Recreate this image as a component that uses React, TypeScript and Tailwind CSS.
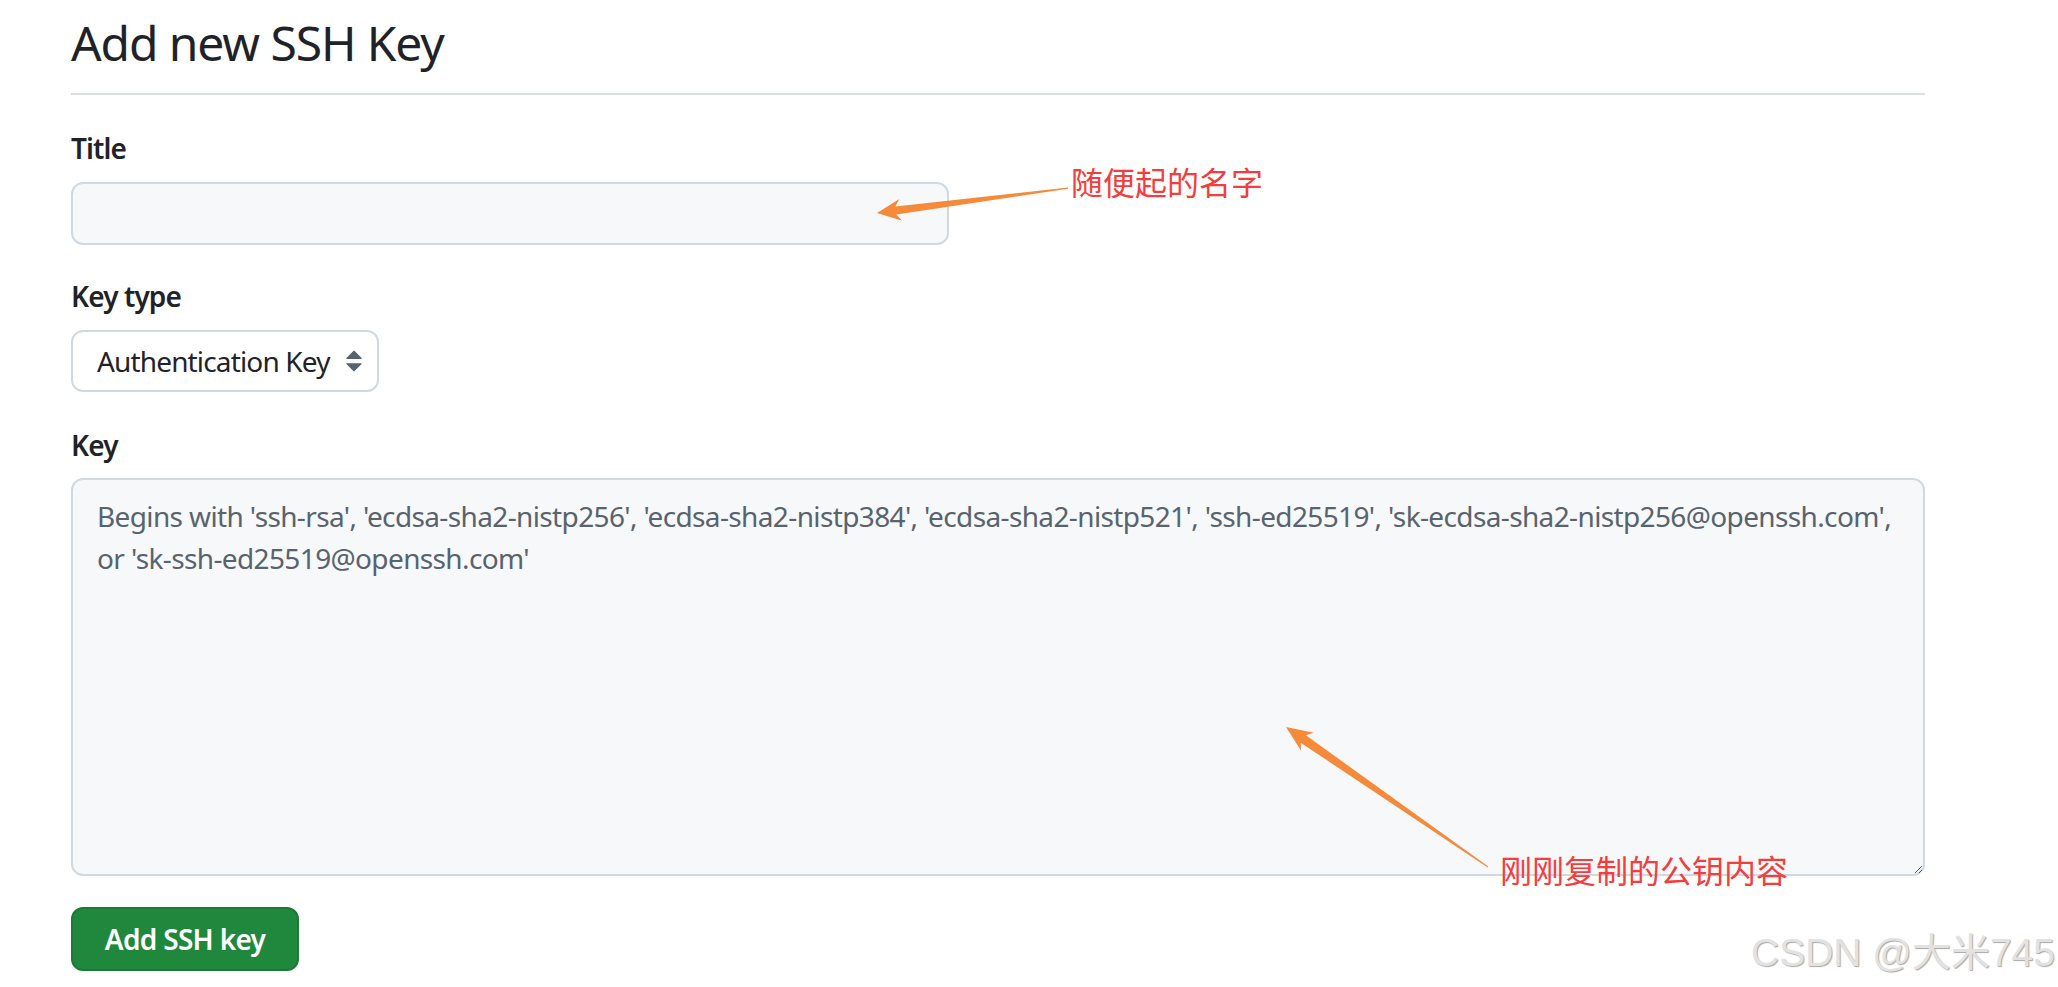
import React from "react";

function SelectArrows() {
  return (
    <svg width="34" height="34" viewBox="0 0 16 16" fill="#59636e" aria-hidden="true">
      <path d="M4.427 9.427l3.396 3.396a.25.25 0 00.354 0l3.396-3.396A.25.25 0 0011.396 9H4.604a.25.25 0 00-.177.427zM4.427 6.573l3.396-3.396a.25.25 0 01.354 0l3.396 3.396A.25.25 0 0111.396 7H4.604a.25.25 0 01-.177-.427z" />
    </svg>
  );
}

export default function App() {
  const placeholder =
    "Begins with 'ssh-rsa', 'ecdsa-sha2-nistp256', 'ecdsa-sha2-nistp384', 'ecdsa-sha2-nistp521', 'ssh-ed25519', 'sk-ecdsa-sha2-nistp256@openssh.com',\nor 'sk-ssh-ed25519@openssh.com'";
  return (
    <div className="relative w-full h-[987px] overflow-hidden bg-white text-[#1f2328] font-['Noto_Sans',sans-serif]">
      <div className="flex flex-col pl-[71px] pt-[11px] w-[1925px]">
        <h1 className="h-[64px] text-[48px] leading-[64px] font-normal tracking-[-1.1px] whitespace-nowrap">
          Add new SSH Key
        </h1>
        <div className="mt-[18px] h-[2px] w-[1854px] bg-[#d8dee4]" />

        <label className="mt-[33px] h-[40px] text-[28px] leading-[40px] font-semibold tracking-[-0.9px]">
          Title
        </label>
        <input
          type="text"
          className="mt-[14px] h-[63px] w-[878px] rounded-[12px] border-2 border-[#d1d9e0] bg-[#f6f8fa] px-[24px] text-[28px] outline-none"
        />

        <label className="mt-[31px] h-[40px] text-[28px] leading-[40px] font-semibold tracking-[-0.9px]">
          Key type
        </label>
        <button
          type="button"
          className="mt-[14px] flex h-[62px] w-[308px] items-center rounded-[12px] border-2 border-[#d1d9e0] bg-white pl-[24px] text-left"
        >
          <span className="w-[240px] text-[28px] leading-[42px] tracking-[-0.85px] whitespace-nowrap text-[#1f2328]">
            Authentication Key
          </span>
          <SelectArrows />
        </button>

        <label className="mt-[33px] h-[40px] text-[28px] leading-[40px] font-semibold tracking-[-0.9px]">
          Key
        </label>
        <textarea
          placeholder={placeholder}
          className="mt-[13px] h-[398px] w-[1854px] rounded-[12px] border-2 border-[#d1d9e0] bg-[#f6f8fa] px-[24px] pt-[15px] text-[28px] leading-[42px] tracking-[-0.63px] text-[#1f2328] outline-none placeholder:text-[#59636e]"
        />

        <button
          type="button"
          className="mt-[31px] flex h-[64px] w-[228px] items-center justify-center rounded-[12px] border-2 border-[#1c7a37] bg-[#1f883d] text-[28px] leading-[40px] font-semibold tracking-[-0.7px] text-white"
        >
          Add SSH key
        </button>
      </div>

      {/* annotations */}
      <svg
        className="pointer-events-none absolute left-0 top-0"
        width="2058"
        height="987"
        viewBox="0 0 2058 987"
      >
        <polygon
          fill="#f68a3b"
          points="877,213 899.4,199 895.3,206.5 1068,187.4 1068,188.8 896.3,214.5 902.2,220.8"
        />
        <polygon
          fill="#f68a3b"
          points="1286,727 1313.7,732.8 1305.9,735.3 1488.3,866.5 1487.7,867.5 1300.7,742.7 1301.1,750.8"
        />
      </svg>
      <div className="pointer-events-none absolute left-[1071px] top-[165px] text-[32px] leading-[32px] whitespace-nowrap text-[#f53d3d] font-['Noto_Sans_CJK_SC',sans-serif]">
        随便起的名字
      </div>
      <div className="pointer-events-none absolute left-[1500px] top-[853px] text-[32px] leading-[32px] whitespace-nowrap text-[#f53d3d] font-['Noto_Sans_CJK_SC',sans-serif]">
        刚刚复制的公钥内容
      </div>
      <div className="pointer-events-none absolute left-[1751px] top-[933px] text-[39px] leading-[39px] whitespace-nowrap text-[#e2e2e2] [text-shadow:1px_1px_1px_rgba(0,0,0,0.35)] font-['Liberation_Sans','Noto_Sans_CJK_SC',sans-serif]">
        CSDN @大米745
      </div>
    </div>
  );
}
